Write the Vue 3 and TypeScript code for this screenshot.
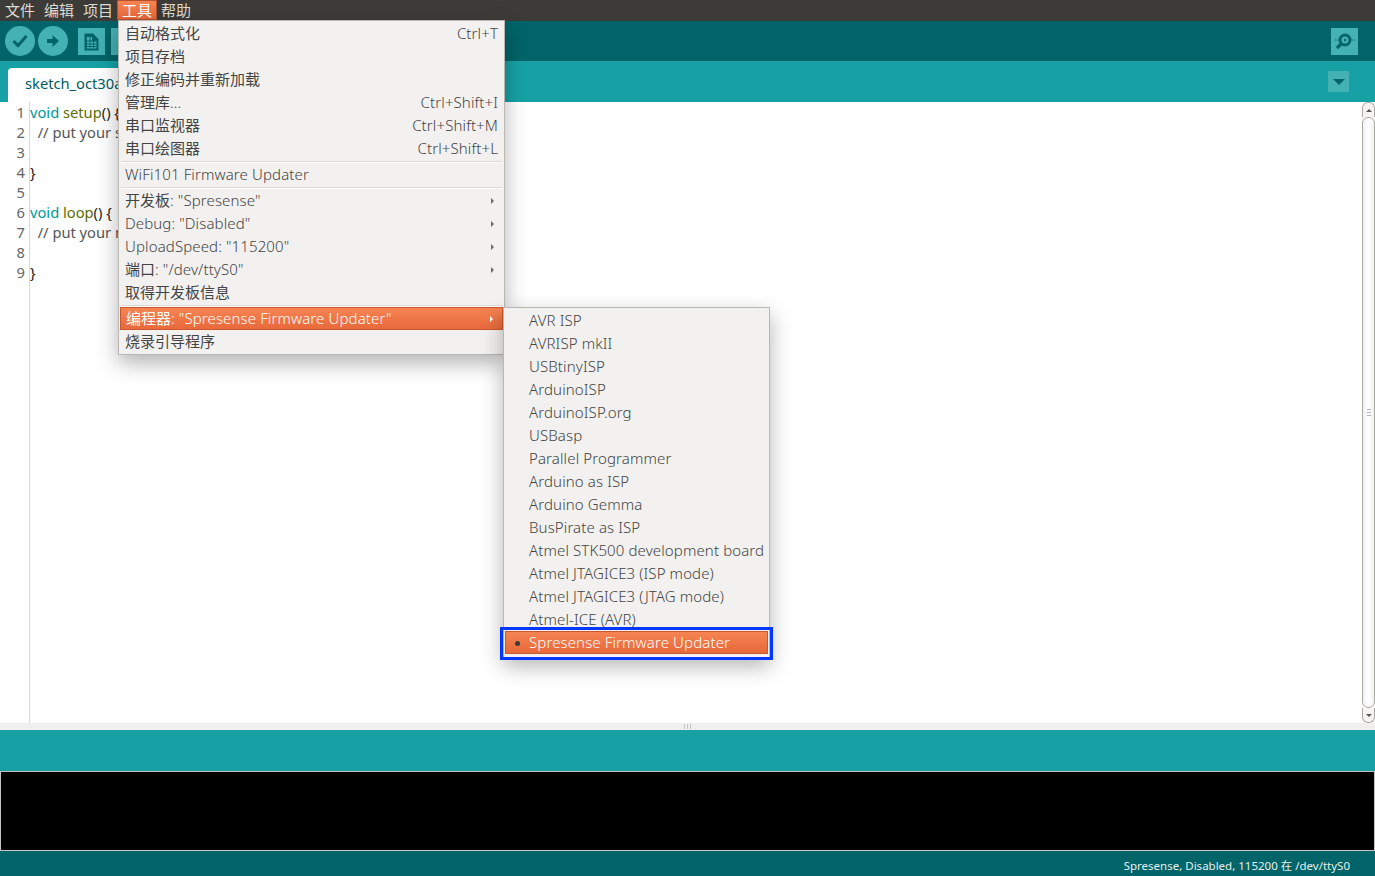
<script setup lang="ts">
interface Row { label?: string; key?: string; arrow?: boolean; active?: boolean; sep?: boolean }
const menubar = ['文件', '编辑', '项目', '工具', '帮助']
const rows: Row[] = [
  { label: '自动格式化', key: 'Ctrl+T' },
  { label: '项目存档' },
  { label: '修正编码并重新加载' },
  { label: '管理库...', key: 'Ctrl+Shift+I' },
  { label: '串口监视器', key: 'Ctrl+Shift+M' },
  { label: '串口绘图器', key: 'Ctrl+Shift+L' },
  { sep: true },
  { label: 'WiFi101 Firmware Updater' },
  { sep: true },
  { label: '开发板: "Spresense"', arrow: true },
  { label: 'Debug: "Disabled"', arrow: true },
  { label: 'UploadSpeed: "115200"', arrow: true },
  { label: '端口: "/dev/ttyS0"', arrow: true },
  { label: '取得开发板信息' },
  { sep: true },
  { label: '编程器: "Spresense Firmware Updater"', arrow: true, active: true },
  { label: '烧录引导程序' },
]
const programmers = ['AVR ISP', 'AVRISP mkII', 'USBtinyISP', 'ArduinoISP', 'ArduinoISP.org', 'USBasp', 'Parallel Programmer', 'Arduino as ISP', 'Arduino Gemma', 'BusPirate as ISP', 'Atmel STK500 development board', 'Atmel JTAGICE3 (ISP mode)', 'Atmel JTAGICE3 (JTAG mode)', 'Atmel-ICE (AVR)']
const lines = [
  { n: 1, k: 'void', f: 'setup', r: '() {' },
  { n: 2, c: '  // put your setup code here, to run once:' },
  { n: 3 },
  { n: 4, r: '}' },
  { n: 5 },
  { n: 6, k: 'void', f: 'loop', r: '() {' },
  { n: 7, c: '  // put your main code here, to run repeatedly:' },
  { n: 8 },
  { n: 9, r: '}' },
]
// CJK runs are set a little heavier than the light Latin runs beside them.
function segments(s?: string) {
  return (s ?? '').split(/([\u4e00-\u9fff]+)/).filter(Boolean).map((text) => ({ text, cjk: /[\u4e00-\u9fff]/.test(text) }))
}
</script>

<template>
  <div class="app">
    <div class="menubar">
      <span v-for="m in menubar" :key="m" class="mb-item" :class="{ open: m === '工具' }">{{ m }}</span>
    </div>

    <div class="toolbar">
      <button class="round">
        <svg width="16" height="14" viewBox="0 0 16 14"><path d="M1.5 7 L6 11.5 L14.5 2" fill="none" stroke="#006468" stroke-width="3" /></svg>
      </button>
      <button class="round">
        <svg width="14" height="14" viewBox="0 0 14 14"><path d="M1 5 H6.5 V1 L13 7 L6.5 13 V9 H1 Z" fill="#006468" /></svg>
      </button>
      <button class="square new">
        <svg class="newicon" width="15" height="18" viewBox="0 0 15 18"><path d="M0.5 0.5 H9 L14.5 6 V17.5 H0.5 Z" fill="#006468" /><path d="M3 4 H8 V8 H12.5 V15.5 H3 Z" fill="#44b1b5" /><path d="M3 8 H12.5 M3 11 H12.5 M3 13.5 H12.5 M6 4 V15.5 M9.5 8 V15.5" stroke="#006468" stroke-width="1" /></svg>
      </button>
      <button class="square"></button>
      <div class="spacer"></div>
      <button class="square serial">
        <svg width="25" height="25" viewBox="0 0 25 25">
          <circle cx="13" cy="11" r="5" fill="none" stroke="#006468" stroke-width="3" />
          <circle cx="13" cy="11" r="1.2" fill="#006468" />
          <path d="M9.5 14.5 L5 19" stroke="#006468" stroke-width="3.2" />
          <path d="M3 11 H6 M20 11 H23" stroke="#006468" stroke-width="1" stroke-dasharray="1 1" />
        </svg>
      </button>
    </div>

    <div class="tabbar">
      <div class="tab">sketch_oct30a</div>
      <div class="spacer"></div>
      <button class="tabmenu"><i class="tri"></i></button>
    </div>

    <div class="editor">
      <div class="gutter">
        <div v-for="l in lines" :key="l.n" class="num">{{ l.n }}</div>
      </div>
      <div class="code">
        <div v-for="l in lines" :key="l.n" class="line"><span class="kw">{{ l.k }}</span><template v-if="l.k">&nbsp;</template><span class="fn">{{ l.f }}</span><span>{{ l.r }}</span><span class="cm">{{ l.c }}</span></div>
      </div>
      <div class="scroll">
        <div class="sb-btn top"><i class="up"></i></div>
        <div class="thumb"><span class="grip"></span></div>
        <div class="sb-btn bottom"><i class="down"></i></div>
      </div>
    </div>

    <div class="splitter"><span class="handle"></span></div>
    <div class="msgbar"></div>
    <div class="console"></div>
    <div class="status">Spresense, Disabled, 115200 在 /dev/ttyS0</div>

    <div class="menu tools">
      <template v-for="(r, i) in rows" :key="i">
        <div v-if="r.sep" class="sep"></div>
        <div v-else class="row" :class="{ active: r.active }">
          <span class="label"><span v-for="(s, j) in segments(r.label)" :key="j" :class="{ cjk: s.cjk }">{{ s.text }}</span></span>
          <span v-if="r.key" class="key">{{ r.key }}</span>
          <i v-if="r.arrow" class="arrow"></i>
        </div>
      </template>
    </div>

    <div class="menu sub">
      <div v-for="p in programmers" :key="p" class="row prog">{{ p }}</div>
      <div class="row prog active"><i class="dot"></i>Spresense Firmware Updater</div>
    </div>
    <div class="callout"></div>
  </div>
</template>

<style>
html, body { margin: 0; padding: 0; overflow: hidden; }
</style>

<style scoped>
.app {
  position: relative;
  width: 1375px;
  height: 876px;
  display: flex;
  flex-direction: column;
  overflow: hidden;
  font-family: "Noto Sans", "Noto Sans CJK SC", sans-serif;
  font-weight: 300;
  font-size: 15px;
  background: #fff;
}
button { border: 0; padding: 0; display: flex; align-items: center; justify-content: center; }
.spacer { flex: 1; }
.cjk { font-weight: 400; letter-spacing: 0; }

.menubar {
  height: 21px;
  background: #3c3b37;
  display: flex;
  flex: none;
}
.mb-item {
  color: #dfdbd2;
  font-size: 15px;
  font-weight: 400;
  line-height: 21px;
  height: 20px;
  padding: 0 5px;
  margin-right: -1px;
  box-sizing: border-box;
  width: 40px;
  text-align: center;
}
.mb-item.open {
  color: #fff;
  background: linear-gradient(#f58452, #e8683a);
  border: 1px solid #b7502c;
  line-height: 19px;
  padding: 0;
}

.toolbar {
  height: 40px;
  flex: none;
  background: #006468;
  display: flex;
  align-items: center;
  padding: 0 17px 0 5px;
}
.round {
  width: 30px;
  height: 30px;
  border-radius: 50%;
  background: #44b1b5;
  margin-right: 3px;
}
.square {
  width: 27px;
  height: 27px;
  background: #44b1b5;
}
.square.new { margin-left: 7px; margin-right: 6px; align-items: flex-start; }
.newicon { margin-top: 5px; }

.tabbar {
  height: 41px;
  flex: none;
  background: #17a1a5;
  display: flex;
  align-items: flex-end;
  padding: 0 26px 0 8px;
}
.tab {
  width: 200px;
  height: 34px;
  background: #fff;
  border-radius: 4px 4px 0 0;
  color: #005c5f;
  font-size: 14.7px;
  font-weight: 400;
  line-height: 31px;
  padding-left: 17px;
  box-sizing: border-box;
}
.tabmenu {
  width: 21px;
  height: 21px;
  background: #44b1b5;
  margin-bottom: 10px;
}
.tri {
  width: 0;
  height: 0;
  border-left: 6px solid transparent;
  border-right: 6px solid transparent;
  border-top: 6px solid #006468;
}

.editor {
  flex: 1;
  min-height: 0;
  display: flex;
  background: #fff;
  font-size: 14.7px;
  font-weight: 400;
  line-height: 20px;
}
.gutter {
  width: 29px;
  flex: none;
  border-right: 1px solid #d8d8d8;
  color: #666;
  text-align: right;
}
.num { padding-right: 4px; }
.code { flex: 1; white-space: pre; color: #222; }
.line { height: 20px; }
.kw { color: #00979c; }
.fn { color: #5e6d03; }
.cm { color: #555; }

.scroll {
  width: 13px;
  flex: none;
  display: flex;
  flex-direction: column;
  align-items: stretch;
  position: relative;
}
.sb-btn {
  height: 14px;
  flex: none;
  border: 1px solid #a9a9a5;
  background: #f5f4f3;
  display: flex;
  align-items: center;
  justify-content: center;
}
.sb-btn.top { border-radius: 6px 6px 0 0; border-bottom: 0; }
.sb-btn.bottom { border-radius: 0 0 6px 6px; border-top: 0; }
.up, .down { width: 0; height: 0; border-left: 3px solid transparent; border-right: 3px solid transparent; }
.up { border-bottom: 3px solid #555; }
.down { border-top: 3px solid #555; }
.thumb {
  flex: 1;
  border: 1px solid #a9a9a5;
  border-radius: 6px;
  background: linear-gradient(90deg, #f2f1f0, #fff 50%, #f2f1f0);
  display: flex;
  align-items: center;
  justify-content: center;
}
.grip {
  width: 4px;
  height: 7px;
  background: repeating-linear-gradient(#b5b5b5 0 1px, transparent 1px 3px);
}

.splitter {
  height: 7px;
  flex: none;
  background: #f1efee;
  display: flex;
  justify-content: center;
  align-items: center;
}
.handle {
  width: 7px;
  height: 5px;
  background: repeating-linear-gradient(90deg, #c4c4c4 0 1px, transparent 1px 3px);
}
.msgbar { height: 41px; flex: none; background: #17a1a5; }
.console {
  height: 80px;
  flex: none;
  box-sizing: border-box;
  background: #000;
  border: 1px solid #c4c4c4;
}
.status {
  height: 25px;
  flex: none;
  background: #006468;
  color: #e6eeee;
  font-size: 11.5px;
  font-weight: 400;
  line-height: 29px;
  text-align: right;
  padding-right: 25px;
}

.menu {
  position: absolute;
  background: #f2f1f0;
  border: 1px solid #b9b7b2;
  box-sizing: border-box;
  color: #444;
  box-shadow: 0 8px 20px rgba(0, 0, 0, 0.3);
}
.tools {
  left: 118px;
  top: 20px;
  width: 387px;
  height: 335px;
  padding-top: 1px;
}
.sub {
  left: 503px;
  top: 307px;
  width: 267px;
  height: 351px;
  padding-top: 1px;
}
.row {
  height: 23px;
  box-sizing: border-box;
  line-height: 21px;
  padding: 0 6px;
  letter-spacing: 0.12px;
  display: flex;
  justify-content: space-between;
  align-items: center;
  white-space: nowrap;
  position: relative;
  font-size: 15px;
}
.row.active {
  color: #fff;
  background: linear-gradient(#f58452, #e9693b);
  border: 1px solid #c9582f;
  margin: 0 1px;
  padding: 0 5px;
}
.sep { height: 1px; background: #d9d7d3; margin: 1px 2px 1px; }
.tools .sep { height: 2px; margin: 1px 2px 0; background: linear-gradient(#dcdad5 50%, #fff 50%); }
.key { color: #444; }
.arrow {
  position: absolute;
  right: 10px;
  top: 50%;
  margin-top: -3px;
  width: 0;
  height: 0;
  border-top: 3px solid transparent;
  border-bottom: 3px solid transparent;
  border-left: 3px solid #6b6b6b;
}
.row.active .arrow { right: 9px; border-left-color: #fff; }
.prog { justify-content: flex-start; padding-left: 25px; }
.prog.active { padding-left: 23px; margin: 0 1px; }
.dot {
  position: absolute;
  left: 9px;
  top: 50%;
  margin-top: -2px;
  width: 5px;
  height: 5px;
  border-radius: 50%;
  background: #3c3b37;
}
.callout {
  position: absolute;
  left: 500px;
  top: 627px;
  width: 273px;
  height: 33px;
  box-sizing: border-box;
  border: 3px solid #0037ff;
}
</style>
